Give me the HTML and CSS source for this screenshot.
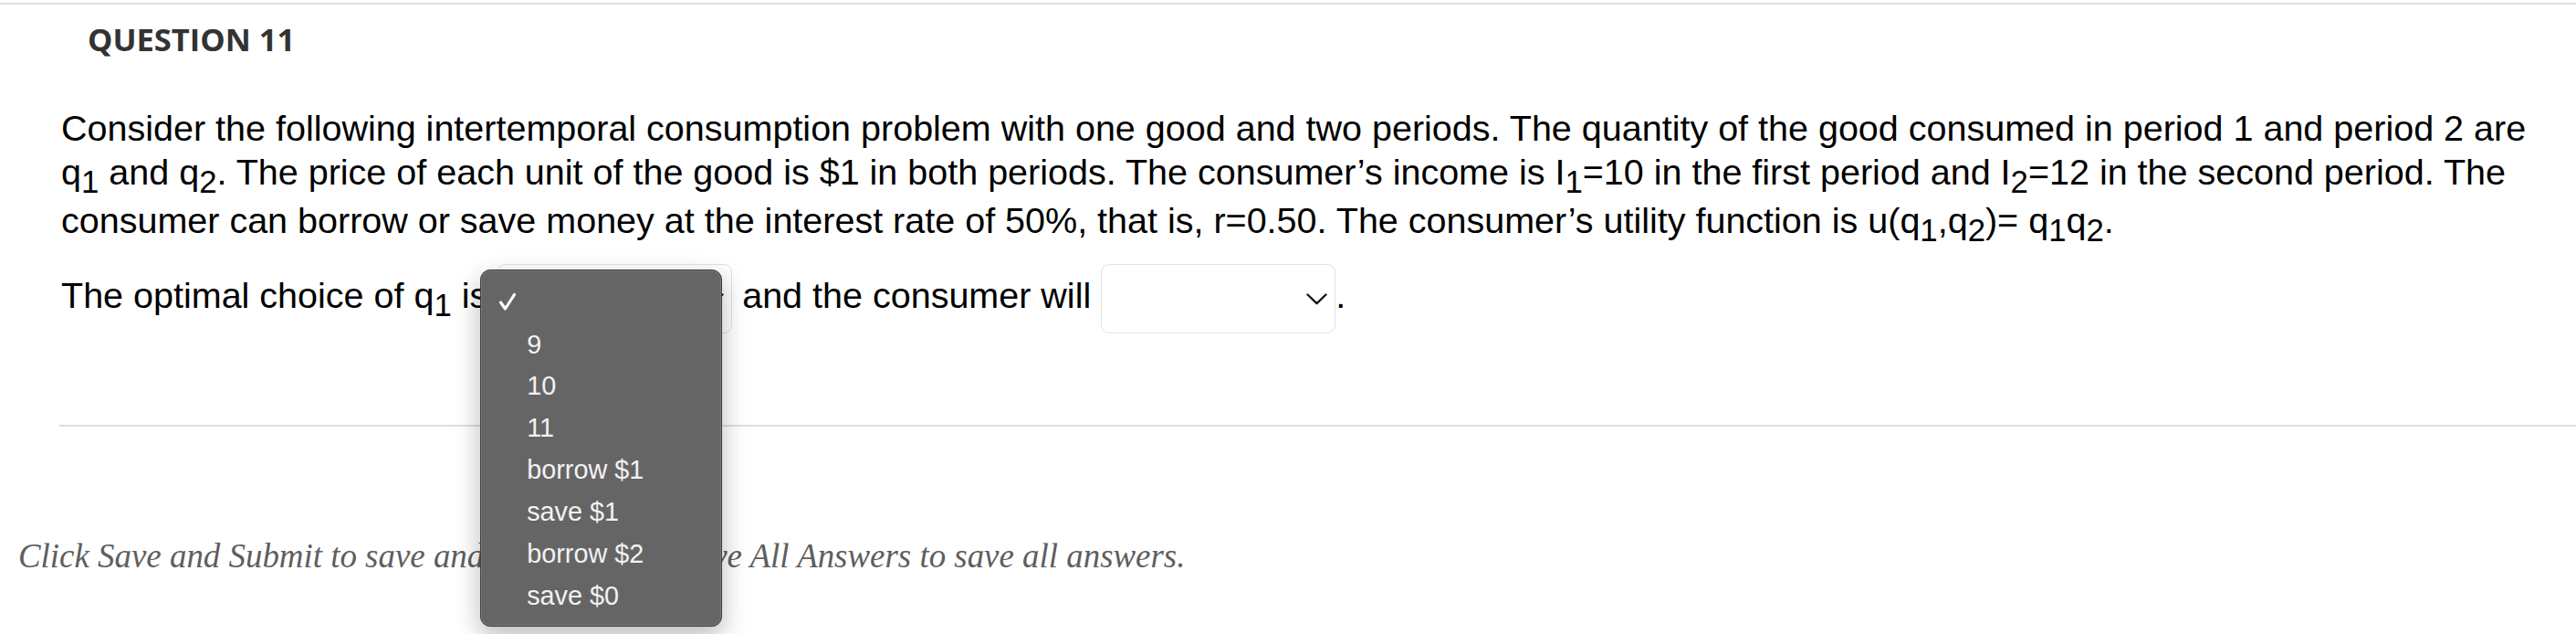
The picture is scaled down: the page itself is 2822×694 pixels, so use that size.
FILE: index.html
```html
<!DOCTYPE html>
<html lang="en">
<head>
<meta charset="utf-8">
<title>Question 11</title>
<link rel="stylesheet" href="styles.css">
</head>
<body>
<div class="top-rule"></div>
<h2 class="q-title">QUESTION 11</h2>
<div class="q-body">
  <p class="q-text">Consider the following intertemporal consumption problem with one good and two periods. The quantity of the good consumed in period 1 and period 2 are q<sub>1</sub> and q<sub>2</sub>. The price of each unit of the good is $1 in both periods. The consumer’s income is I<sub>1</sub>=10 in the first period and I<sub>2</sub>=12 in the second period. The consumer can borrow or save money at the interest rate of 50%, that is, r=0.50. The consumer’s utility function is u(q<sub>1</sub>,q<sub>2</sub>)= q<sub>1</sub>q<sub>2</sub>.</p>
  <p class="q-answer">The optimal choice of q<sub>1</sub> is <span class="sel"><svg class="chev" width="23" height="13" viewBox="0 0 23 13"><path d="M1.5 1.5 L11.5 11.2 L21.5 1.5" fill="none" stroke="#111" stroke-width="2.3" stroke-linecap="round" stroke-linejoin="round"/></svg><span class="menu"><span class="opt"><svg class="check" width="20" height="21" viewBox="0 0 20 21"><path d="M2.5 11 L7.5 18 L17.5 2.5" fill="none" stroke="#fff" stroke-width="3.2" stroke-linecap="round" stroke-linejoin="round"/></svg></span><span class="opt">9</span><span class="opt">10</span><span class="opt">11</span><span class="opt">borrow $1</span><span class="opt">save $1</span><span class="opt">borrow $2</span><span class="opt">save $0</span></span></span> and the consumer will <span class="sel"><svg class="chev" width="23" height="13" viewBox="0 0 23 13"><path d="M1.5 1.5 L11.5 11.2 L21.5 1.5" fill="none" stroke="#111" stroke-width="2.3" stroke-linecap="round" stroke-linejoin="round"/></svg></span>.</p>
</div>
<div class="sep"></div>
<p class="footer">Click Save and Submit to save and submit. Click Save All Answers to save all answers.</p>
</body>
</html>
```
FILE: styles.css
```css
html, body {
  margin: 0;
  padding: 0;
  background: #fff;
}
body {
  width: 2822px;
  height: 694px;
  overflow: hidden;
  font-family: "Liberation Sans", Arial, sans-serif;
  color: #000;
}
.top-rule {
  margin-top: 3px;
  height: 2px;
  background: #dedede;
}
.q-title {
  margin: 18px 0 0 96px;
  font-family: "Open Sans", sans-serif;
  font-weight: 700;
  font-size: 34.5px;
  line-height: 40px;
  color: #333;
}
.q-body {
  margin-left: 67px;
  width: 2723px;
  font-size: 39.5px;
}
.q-text {
  margin: 54px 0 0 0;
  line-height: 47.5px;
}
sub {
  font-size: 0.88em;
  line-height: normal;
}
.q-answer {
  margin: 17px 0 0 0;
  line-height: normal;
}
.sel {
  position: relative;
  display: inline-flex;
  align-items: center;
  justify-content: flex-end;
  box-sizing: border-box;
  width: 257px;
  height: 76px;
  padding-right: 8px;
  border: 1.5px solid #e2e2e2;
  border-radius: 9px;
  background: #fff;
  vertical-align: middle;
}
.chev {
  display: block;
}
.menu {
  position: absolute;
  left: -20px;
  top: 5px;
  z-index: 5;
  box-sizing: border-box;
  width: 265px;
  height: 391px;
  padding: 12px 0 10px;
  display: flex;
  flex-direction: column;
  background: #666566;
  border: 1.5px solid #3e3e3e;
  border-radius: 11px;
  box-shadow: 0 10px 28px rgba(0,0,0,0.28), 0 0 0 1px rgba(255,255,255,0.12) inset;
}
.opt {
  position: relative;
  display: flex;
  align-items: center;
  height: 46px;
  padding-left: 50px;
  font-size: 28.8px;
  color: #f2f2f2;
  white-space: nowrap;
}
.check {
  position: absolute;
  left: 19px;
  top: 12px;
}
.sep {
  margin: 100px 0 0 65px;
  height: 2px;
  background: #dedede;
}
.footer {
  margin: 120px 0 0 20px;
  font-family: "Liberation Serif", "Times New Roman", serif;
  font-style: italic;
  font-size: 36.9px;
  color: #5e5e5e;
}
```
